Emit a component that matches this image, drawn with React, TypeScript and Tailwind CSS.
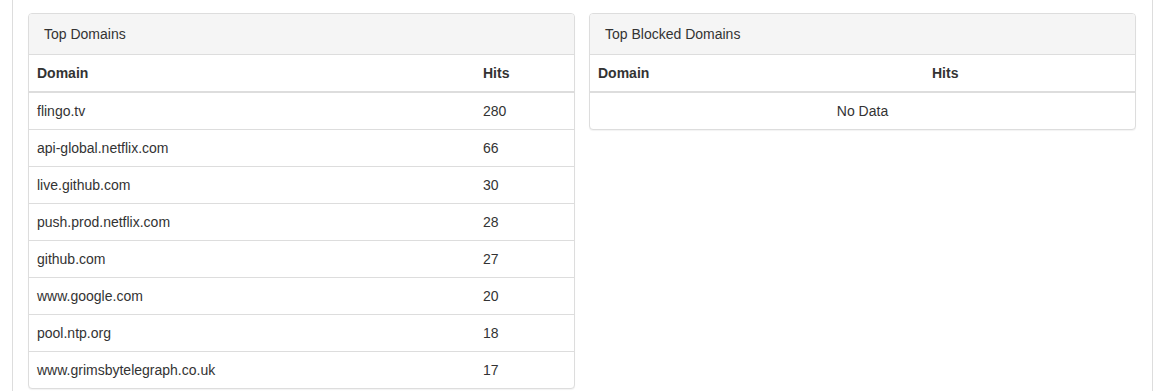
import React from 'react';

const topDomains = [
  { domain: 'flingo.tv', hits: 280 },
  { domain: 'api-global.netflix.com', hits: 66 },
  { domain: 'live.github.com', hits: 30 },
  { domain: 'push.prod.netflix.com', hits: 28 },
  { domain: 'github.com', hits: 27 },
  { domain: 'www.google.com', hits: 20 },
  { domain: 'pool.ntp.org', hits: 18 },
  { domain: 'www.grimsbytelegraph.co.uk', hits: 17 },
];

const blockedDomains: { domain: string; hits: number }[] = [];

interface PanelProps {
  title: string;
  rows: { domain: string; hits: number }[];
  domainWidth: string;
}

const DomainPanel: React.FC<PanelProps> = ({ title, rows, domainWidth }) => (
  <div className="w-[547px] self-start border border-[#ddd] rounded-[4px] bg-white shadow-[0_1px_1px_rgba(0,0,0,0.05)]">
    {/* Heading */}
    <div className="px-[15px] py-[10px] bg-[#f5f5f5] border-b border-[#ddd] rounded-t-[3px] leading-[20px]">
      {title}
    </div>

    <table className="w-full border-collapse">
      <thead>
        <tr>
          <th className={`${domainWidth} p-[8px] text-left font-bold leading-[20px] border-b-2 border-[#ddd]`}>Domain</th>
          <th className="p-[8px] text-left font-bold leading-[20px] border-b-2 border-[#ddd]">Hits</th>
        </tr>
      </thead>
      <tbody>
        {rows.length === 0 ? (
          <tr>
            <td colSpan={2} className="p-[8px] text-center leading-[20px]">No Data</td>
          </tr>
        ) : (
          rows.map((row, i) => (
            <tr key={row.domain}>
              <td className={`p-[8px] leading-[20px] ${i > 0 ? 'border-t border-[#ddd]' : ''}`}>{row.domain}</td>
              <td className={`p-[8px] leading-[20px] ${i > 0 ? 'border-t border-[#ddd]' : ''}`}>{row.hits}</td>
            </tr>
          ))
        )}
      </tbody>
    </table>
  </div>
);

export default function App() {
  return (
    <div className="bg-white min-h-screen text-[14px] text-[#333]" style={{ fontFamily: '"Liberation Sans", Arial, sans-serif' }}>
      <div className="ml-[12px] w-[1141px] min-h-screen border-x border-[#ddd] pt-[13px] pl-[15px] pr-[16px] flex gap-[14px]">
        <DomainPanel title="Top Domains" rows={topDomains} domainWidth="w-[446px]" />
        <DomainPanel title="Top Blocked Domains" rows={blockedDomains} domainWidth="w-[334px]" />
      </div>
    </div>
  );
}
